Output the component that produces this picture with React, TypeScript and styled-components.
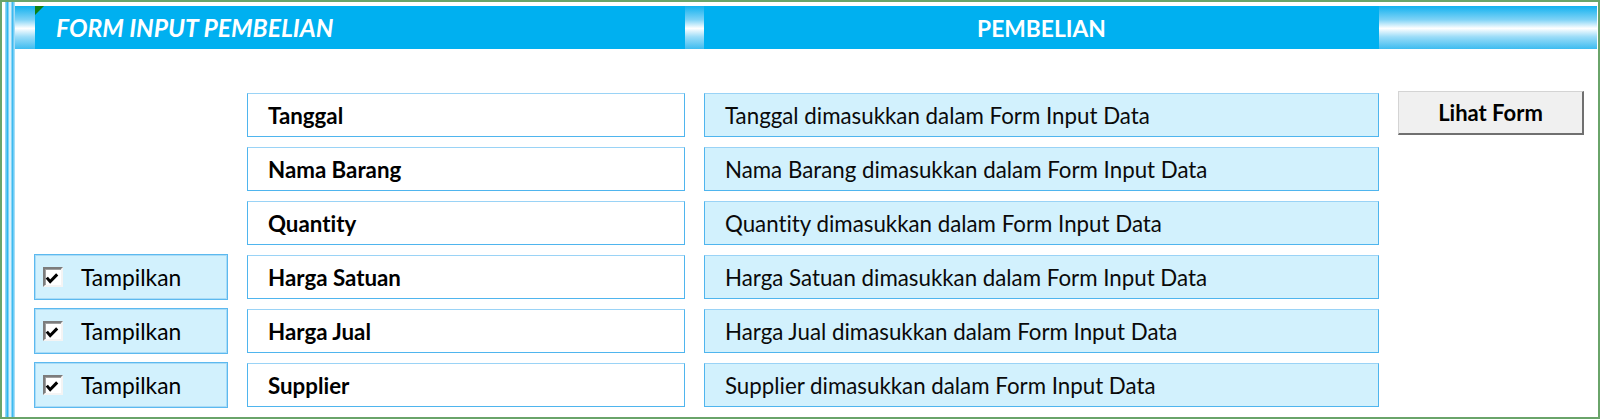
import { createGlobalStyle } from 'styled-components'
import styled from 'styled-components'

const GlobalStyle = createGlobalStyle`
	html, body {
		margin: 0;
		padding: 0;
		background: #ffffff;
	}
	body {
		font-family: Lato, 'Liberation Sans', sans-serif;
		font-variant-ligatures: none;
		color: #000;
	}
`

const gloss = `linear-gradient(
	to bottom,
	#12b1ef 0%,
	#7fd3f6 32%,
	#ffffff 52%,
	#9adcf8 72%,
	#3dbcf0 100%
)`

const Sheet = styled.div`
	width: 1600px;
	height: 419px;
	box-sizing: border-box;
	border: 2px solid #6aa46a;
	padding: 0 1px 0 3px;
	display: flex;
	overflow: hidden;
`
const SideStrip = styled.div`
	width: 10px;
	flex: none;
	background: linear-gradient(
		to right,
		#a9def8 0%,
		#2fb6ee 25%,
		#ffffff 50%,
		#3dbaf0 75%,
		#bfe6f9 100%
	);
`
const Main = styled.div`
	flex: 1;
	display: flex;
	flex-direction: column;
`
const Header = styled.div`
	height: 43px;
	margin-top: 4px;
	display: flex;
	flex: none;
`
const Gloss = styled.div<{ $w?: number }>`
	width: ${p => (p.$w ? `${p.$w}px` : 'auto')};
	flex: ${p => (p.$w ? 'none' : '1')};
	background: ${gloss};
`
const HeaderCell = styled.div<{ $w: number; $center?: boolean }>`
	width: ${p => p.$w}px;
	flex: none;
	position: relative;
	background: #00b0f0;
	display: flex;
	align-items: center;
	justify-content: ${p => (p.$center ? 'center' : 'flex-start')};
	padding-left: ${p => (p.$center ? 0 : 21)}px;
	box-sizing: border-box;
	color: #ffffff;
	font-weight: 700;
	font-size: ${p => (p.$center ? 22.8 : 24.6)}px;
	font-style: ${p => (p.$center ? 'normal' : 'italic')};
`
const Marker = styled.span`
	position: absolute;
	left: 0;
	top: 0;
	width: 9px;
	height: 9px;
	background: #0f7f12;
	clip-path: polygon(0 0, 100% 0, 0 100%);
`
const Grid = styled.div`
	display: grid;
	grid-template-columns: 194px 438px 675px 186px;
	grid-auto-rows: 44px;
	column-gap: 19px;
	row-gap: 10px;
	padding: 44px 0 0 19px;
`
const Blank = styled.div``
const ToggleCell = styled.label`
	margin: -1px 0;
	box-sizing: border-box;
	background: #d2f1fd;
	border: 1px solid #5cb9ef;
	box-shadow: inset 0 0 0 1px #a9dcf7;
	display: flex;
	align-items: center;
	padding-left: 8px;
	gap: 18px;
	font-size: 22.8px;
`
const CheckBox = styled.span`
	width: 20px;
	height: 20px;
	box-sizing: border-box;
	border-style: solid;
	border-width: 2px;
	border-color: #7c7c7c #f4f4f4 #f4f4f4 #7c7c7c;
	box-shadow: inset 1px 1px 0 #a0a0a0;
	background: #ffffff;
	display: flex;
`
const LabelBox = styled.div`
	box-sizing: border-box;
	border: 1px solid #4fb5ee;
	border-top-color: #9ad3f6;
	display: flex;
	align-items: center;
	padding-left: 20px;
	font-weight: 700;
	font-size: 22.3px;
`
const NoteBox = styled.div`
	box-sizing: border-box;
	background: #d2f1fd;
	border: 1px solid #4fb5ee;
	border-top-color: #9ad3f6;
	display: flex;
	align-items: center;
	padding-left: 20px;
	font-size: 22.3px;
	color: #0a0a0a;
`
const FormButton = styled.button`
	margin-top: -2px;
	height: 44px;
	box-sizing: border-box;
	background: #f0f0f0;
	border-style: solid;
	border-width: 1px 2px 2px 1px;
	border-color: #d4d4d4 #707070 #707070 #d4d4d4;
	font-family: inherit;
	font-weight: 700;
	font-size: 22px;
	color: #000;
	padding: 0;
`

const rows = [
	{ label: 'Tanggal', toggle: false },
	{ label: 'Nama Barang', toggle: false },
	{ label: 'Quantity', toggle: false },
	{ label: 'Harga Satuan', toggle: true },
	{ label: 'Harga Jual', toggle: true },
	{ label: 'Supplier', toggle: true },
]

function Check() {
	return (
		<CheckBox>
			<svg width='16' height='16' viewBox='0 0 16 16'>
				<polyline
					points='1.8,8.6 5.2,12.6 12.2,5.4'
					fill='none'
					stroke='#000'
					strokeWidth='3'
				/>
			</svg>
		</CheckBox>
	)
}

export default function App() {
	return (
		<>
			<GlobalStyle />
			<Sheet>
				<SideStrip />
				<Main>
					<Header>
						<Gloss $w={20} />
						<HeaderCell $w={650}>
							<Marker />
							FORM INPUT PEMBELIAN
						</HeaderCell>
						<Gloss $w={19} />
						<HeaderCell $w={675} $center>
							PEMBELIAN
						</HeaderCell>
						<Gloss />
					</Header>
					<Grid>
						{rows.map((r, i) => (
							<>
								{r.toggle ? (
									<ToggleCell key={`t${i}`}>
										<Check />
										Tampilkan
									</ToggleCell>
								) : (
									<Blank key={`b${i}`} />
								)}
								<LabelBox key={`l${i}`}>{r.label}</LabelBox>
								<NoteBox key={`n${i}`}>
									{r.label} dimasukkan dalam Form Input Data
								</NoteBox>
								{i === 0 ? (
									<FormButton key='btn'>Lihat Form</FormButton>
								) : (
									<Blank key={`e${i}`} />
								)}
							</>
						))}
					</Grid>
				</Main>
			</Sheet>
		</>
	)
}
